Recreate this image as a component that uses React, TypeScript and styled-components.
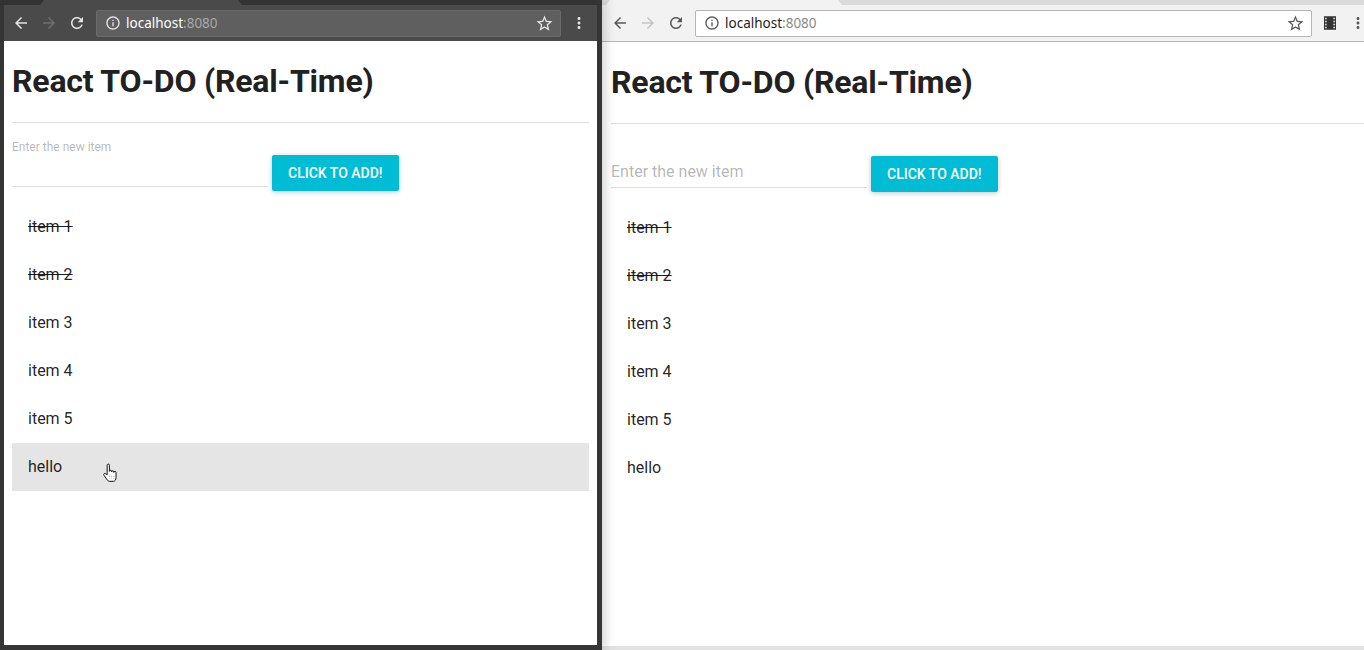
import React from 'react';
import styled, { createGlobalStyle } from 'styled-components';

const GlobalStyle = createGlobalStyle`
  html, body {
    margin: 0;
    padding: 0;
    background: #ffffff;
    overflow: hidden;
  }
  #root {
    width: 1364px;
    height: 650px;
    overflow: hidden;
  }
`;

// Рабочий стол с двумя окнами браузера
const Desktop = styled.div`
  display: flex;
  width: 1364px;
  height: 650px;
  overflow: hidden;
  background: #e6e6e6;
`;

const Window = styled.div<{ $dark?: boolean }>`
  position: relative;
  z-index: ${p => (p.$dark ? 2 : 1)};
  display: flex;
  flex-direction: column;
  flex: 0 0 ${p => (p.$dark ? '602px' : '774px')};
  height: 650px;
  box-sizing: border-box;
  background: ${p => (p.$dark ? '#3a3a3a' : '#e2e2e2')};
  border: ${p => (p.$dark ? '0 solid #353535' : 'none')};
  border-width: ${p => (p.$dark ? '0 5px 5px 4px' : '0')};
  box-shadow: ${p => (p.$dark ? '3px 0 10px rgba(0, 0, 0, 0.18)' : 'none')};
`;

const TabStrip = styled.div<{ $dark?: boolean }>`
  display: flex;
  height: 5px;
  flex: 0 0 5px;
  background: ${p => (p.$dark ? '#333333' : '#dadada')};
  margin-left: ${p => (p.$dark ? '-4px' : '0')};
`;

const Tab = styled.div<{ $dark?: boolean; $start: number; $width: number }>`
  margin-left: ${p => p.$start}px;
  width: ${p => p.$width}px;
  height: 5px;
  background: ${p => (p.$dark ? '#4a4a4a' : '#f2f2f2')};
  clip-path: polygon(0 100%, 4px 0, calc(100% - 4px) 0, 100% 100%);
`;

const Toolbar = styled.div<{ $dark?: boolean }>`
  display: flex;
  align-items: center;
  flex: 0 0 ${p => (p.$dark ? '36px' : '37px')};
  padding: 0 4px 0 ${p => (p.$dark ? '3px' : '4px')};
  box-sizing: border-box;
  background: ${p => (p.$dark ? '#4a4a4a' : '#f2f2f2')};
  border-bottom: ${p => (p.$dark ? 'none' : '1px solid #b8b8b8')};
`;

const ToolButton = styled.div<{ $dim?: boolean; $dark?: boolean }>`
  display: flex;
  align-items: center;
  justify-content: center;
  width: 28px;
  height: 28px;
  flex: 0 0 28px;
  color: ${p =>
    p.$dark ? (p.$dim ? '#6f6f6f' : '#e4e4e4') : p.$dim ? '#c4c4c4' : '#5a5a5a'};
`;

const AddressBar = styled.div<{ $dark?: boolean }>`
  display: flex;
  align-items: center;
  flex: 1;
  height: 27px;
  margin: 0 4px 0 5px;
  padding: 0 6px 0 8px;
  box-sizing: border-box;
  border-radius: 2px;
  background: ${p => (p.$dark ? '#5f5f5f' : '#ffffff')};
  border: 1px solid ${p => (p.$dark ? '#6a6a6a' : '#b5b5b5')};
  color: ${p => (p.$dark ? '#e6e6e6' : '#5a5a5a')};
`;

const Url = styled.span<{ $dark?: boolean }>`
  flex: 1;
  margin-left: 5px;
  font-family: 'Noto Sans', 'DejaVu Sans', sans-serif;
  font-size: 13.5px;
  color: ${p => (p.$dark ? '#ffffff' : '#1e1e1e')};
  white-space: nowrap;
`;

const Port = styled.span<{ $dark?: boolean }>`
  color: ${p => (p.$dark ? '#a8a8a8' : '#8a8a8a')};
`;

const Viewport = styled.div<{ $dark?: boolean }>`
  flex: 1;
  padding: 0 8px 0 ${p => (p.$dark ? '8px' : '9px')};
  background: #ffffff;
  margin-bottom: ${p => (p.$dark ? '0' : '4px')};
  font-family: Roboto, 'Liberation Sans', sans-serif;
  color: rgba(0, 0, 0, 0.87);
  overflow: hidden;
`;

const Title = styled.h1`
  margin: 21.44px 0;
  font-size: 32px;
  font-weight: 700;
  line-height: normal;
  letter-spacing: -0.2px;
  color: #212121;
`;

const Divider = styled.div`
  height: 1px;
  background: #e0e0e0;
`;

const FormRow = styled.div`
  display: flex;
  align-items: flex-start;
`;

const Field = styled.div<{ $floating?: boolean }>`
  display: flex;
  flex-direction: column;
  justify-content: ${p => (p.$floating ? 'flex-start' : 'flex-end')};
  width: 256px;
  height: 64px;
  box-sizing: border-box;
  padding: ${p => (p.$floating ? '17px 0 0' : '0 0 5px')};
  border-bottom: 1px solid #e0e0e0;
`;

const FieldLabel = styled.span<{ $floating?: boolean }>`
  font-size: ${p => (p.$floating ? '12px' : '16px')};
  line-height: ${p => (p.$floating ? '14px' : '20px')};
  color: rgba(0, 0, 0, 0.3);
`;

const AddButton = styled.button`
  margin: 32px 0 0 4px;
  height: 36px;
  padding: 0 16px;
  border: none;
  border-radius: 2px;
  background: #00bcd4;
  color: #ffffff;
  font-family: Roboto, 'Liberation Sans', sans-serif;
  font-size: 14px;
  font-weight: 500;
  text-transform: uppercase;
  box-shadow: 0 1px 6px rgba(0, 0, 0, 0.12), 0 1px 4px rgba(0, 0, 0, 0.12);
`;

const List = styled.div`
  margin-top: 12px;
  display: flex;
  flex-direction: column;
`;

const Item = styled.div<{ $done?: boolean; $hover?: boolean }>`
  position: relative;
  display: flex;
  align-items: center;
  height: 48px;
  padding: 0 16px;
  font-size: 16px;
  background: ${p => (p.$hover ? '#e5e5e5' : 'transparent')};
  text-decoration: ${p => (p.$done ? 'line-through' : 'none')};
`;

const Cursor = styled.svg`
  position: absolute;
  left: 90px;
  top: 20px;
`;

const Icon = ({ d, size = 18 }: { d: string; size?: number }) => (
  <svg width={size} height={size} viewBox="0 0 24 24" fill="currentColor">
    <path d={d} />
  </svg>
);

const ICONS = {
  back: 'M20 11H7.83l5.59-5.59L12 4l-8 8 8 8 1.41-1.41L7.83 13H20v-2z',
  forward: 'M12 4l-1.41 1.41L16.17 11H4v2h12.17l-5.58 5.59L12 20l8-8z',
  reload:
    'M17.65 6.35C16.2 4.9 14.21 4 12 4c-4.42 0-7.99 3.58-7.99 8s3.57 8 7.99 8c3.730 0 6.84-2.55 7.73-6h-2.08c-.82 2.33-3.04 4-5.65 4-3.31 0-6-2.69-6-6s2.69-6 6-6c1.66 0 3.14.69 4.22 1.78L13 11h7V4l-2.35 2.35z',
  info:
    'M11 7h2v2h-2zm0 4h2v6h-2zm1-9C6.48 2 2 6.48 2 12s4.48 10 10 10 10-4.48 10-10S17.52 2 12 2zm0 18c-4.41 0-8-3.59-8-8s3.590-8 8-8 8 3.59 8 8-3.59 8-8 8z',
  star:
    'M22 9.24l-7.19-.62L12 2 9.19 8.63 2 9.24l5.46 4.73L5.82 21 12 17.27 18.18 21l-1.63-7.03L22 9.24zM12 15.4l-3.76 2.27 1-4.28-3.32-2.88 4.38-.38L12 6.1l1.71 4.04 4.38.38-3.32 2.88 1 4.28L12 15.4z',
  more:
    'M12 8c1.1 0 2-.9 2-2s-.9-2-2-2-2 .9-2 2 .9 2 2 2zm0 2c-1.1 0-2 .9-2 2s.9 2 2 2 2-.9 2-2-.9-2-2-2zm0 6c-1.1 0-2 .9-2 2s.9 2 2 2 2-.9 2-2-.9-2-2-2z',
  film:
    'M4 3h16v18H4zM5.5 5v2h2V5zm0 4v2h2V9zm0 4v2h2v-2zm0 4v2h2v-2zM16.5 5v2h2V5zm0 4v2h2V9zm0 4v2h2v-2zm0 4v2h2v-2z',
};

const HandCursor = () => (
  <Cursor width="17" height="20" viewBox="0 0 15 18">
    <path
      d="M4.5 10.5V2a1 1 0 0 1 2 0v5.5a1 1 0 0 1 2 0v0.5a1 1 0 0 1 2 0v0.5a1 1 0 0 1 2 0V13c0 2-1 3.5-2.5 3.5H7c-1.4 0-2.3-0.9-3.2-2.3L1.6 11a1 1 0 0 1 1.6-1.2z"
      fill="#ffffff"
      stroke="#111111"
      strokeWidth="0.9"
      strokeLinejoin="round"
    />
    <path d="M6.5 11.5v2.5M8.5 11.5v2.5M10.5 11.5v2.5" stroke="#999999" strokeWidth="0.7" strokeDasharray="1 1" />
  </Cursor>
);

const items = [
  { text: 'item 1', done: true },
  { text: 'item 2', done: true },
  { text: 'item 3', done: false },
  { text: 'item 4', done: false },
  { text: 'item 5', done: false },
  { text: 'hello', done: false },
];

const BrowserWindow: React.FC<{ dark?: boolean }> = ({ dark }) => (
  <Window $dark={dark}>
    <TabStrip $dark={dark}>
      {dark ? <Tab $dark $start={40} $width={202} /> : <Tab $start={4} $width={236} />}
    </TabStrip>
    <Toolbar $dark={dark}>
      <ToolButton $dark={dark}>
        <Icon d={ICONS.back} />
      </ToolButton>
      <ToolButton $dark={dark} $dim>
        <Icon d={ICONS.forward} />
      </ToolButton>
      <ToolButton $dark={dark}>
        <Icon d={ICONS.reload} />
      </ToolButton>
      <AddressBar $dark={dark}>
        <Icon d={ICONS.info} size={16} />
        <Url $dark={dark}>
          localhost<Port $dark={dark}>:8080</Port>
        </Url>
        <Icon d={ICONS.star} size={19} />
      </AddressBar>
      {!dark && (
        <ToolButton>
          <svg width="18" height="18" viewBox="0 0 24 24">
            <path d={ICONS.film} fill="#333333" fillRule="evenodd" />
          </svg>
        </ToolButton>
      )}
      <ToolButton $dark={dark}>
        <Icon d={ICONS.more} />
      </ToolButton>
    </Toolbar>
    <Viewport $dark={dark}>
      <Title>React TO-DO (Real-Time)</Title>
      <Divider />
      <FormRow>
        <Field $floating={dark}>
          <FieldLabel $floating={dark}>Enter the new item</FieldLabel>
        </Field>
        <AddButton>Click to add!</AddButton>
      </FormRow>
      <List>
        {items.map((item, index) => {
          const hover = dark && index === items.length - 1;
          return (
            <Item key={item.text} $done={item.done} $hover={hover}>
              {item.text}
              {hover && <HandCursor />}
            </Item>
          );
        })}
      </List>
    </Viewport>
  </Window>
);

const App: React.FC = () => (
  <>
    <GlobalStyle />
    <Desktop>
      <BrowserWindow dark />
      <BrowserWindow />
    </Desktop>
  </>
);

export default App;
